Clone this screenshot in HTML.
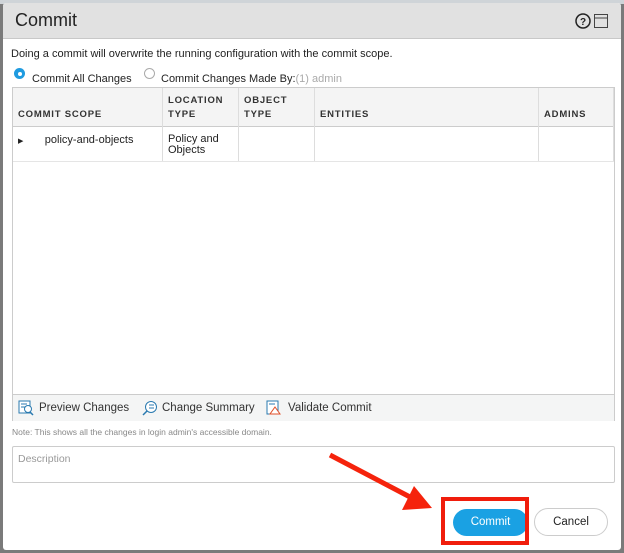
<!DOCTYPE html><html><head><style>
body{margin:0;width:624px;height:553px;background:#7a7a7a;font-family:"Liberation Sans",sans-serif;position:relative;overflow:hidden}
.dlg{position:absolute;left:3px;top:3px;width:618px;height:547px;background:#fff;border-radius:3px;overflow:hidden}
.title{height:35px;background:#e1e1e1;border-bottom:1px solid #c8c8c8;font-size:18px;color:#222;line-height:35px;padding-left:12px}
.abs{position:absolute}
table{border-collapse:collapse;font-size:11px;color:#222}
th{font-size:9.5px;letter-spacing:.8px;text-align:left;font-weight:bold;color:#333;border-right:1px solid #ddd;padding:0 5px;vertical-align:bottom;padding-bottom:4px;height:34px;line-height:14px}
td{border-right:1px solid #ddd;vertical-align:top;padding:7px 5px 3px;height:24px;border-bottom:1px solid #e5e5e5}
</style></head><body>
<div class="abs" style="left:0;top:0;width:624px;height:4px;background:#cfd4d8"></div>
<div class="dlg">
<div class="title">Commit
<svg class="abs" style="left:572px;top:10px" width="34" height="16"><circle cx="8" cy="8" r="7" fill="none" stroke="#222" stroke-width="1.5"/><text x="8" y="12" font-size="10" font-weight="bold" text-anchor="middle" fill="#222" font-family="Liberation Sans">?</text><rect x="19.5" y="1.5" width="13" height="13" fill="none" stroke="#444"/><line x1="19.5" y1="5" x2="32.5" y2="5" stroke="#444"/></svg></div>
<div class="abs" style="left:8px;top:45px;font-size:11px;color:#222">Doing a commit will overwrite the running configuration with the commit scope.</div>
<div class="abs" style="left:11px;top:65px;width:11px;height:11px;border-radius:50%;background:#1f9be0"><div style="margin:3.5px;width:4px;height:4px;border-radius:50%;background:#fff"></div></div>
<div class="abs" style="left:29px;top:70px;font-size:11px;color:#222">Commit All Changes</div>
<div class="abs" style="left:141px;top:65px;width:11px;height:11px;border-radius:50%;border:1px solid #aaa;box-sizing:border-box"></div>
<div class="abs" style="left:158px;top:70px;font-size:11px;color:#222">Commit Changes Made By:<span style="color:#aaa">(1) admin</span></div>
<div class="abs" style="left:9px;top:84px;width:603px;height:334px;border:1px solid #ccc;box-sizing:border-box">
<table style="width:601px">
<tr style="background:#f4f4f4;border-bottom:1px solid #ccc"><th style="width:139px">COMMIT SCOPE</th><th style="width:65px">LOCATION<br>TYPE</th><th style="width:65px">OBJECT<br>TYPE</th><th style="width:213px">ENTITIES</th><th>ADMINS</th></tr>
<tr><td><span style="font-size:7px">▶</span>&nbsp;&nbsp;&nbsp;&nbsp;&nbsp;&nbsp;&nbsp;policy-and-objects</td><td style="line-height:11px">Policy and<br>Objects</td><td></td><td></td><td></td></tr>
</table>
<div class="abs" style="left:0;top:306px;width:601px;height:26px;background:#f4f5f5;border-top:1px solid #ccc;font-size:11.5px;color:#333;line-height:26px">
<svg class="abs" style="left:5px;top:5px" width="16" height="16"><rect x="1" y="1" width="11" height="12" fill="#fff" stroke="#2a7ab0"/><line x1="3" y1="4" x2="9" y2="4" stroke="#2a7ab0"/><line x1="3" y1="7" x2="7" y2="7" stroke="#2a7ab0"/><circle cx="10" cy="9" r="3.5" fill="#fff" stroke="#2a7ab0"/><line x1="12" y1="12" x2="15" y2="15" stroke="#2a7ab0" stroke-width="1.5"/></svg><span class="abs" style="left:26px">Preview Changes</span>
<svg class="abs" style="left:129px;top:5px" width="16" height="16"><circle cx="9" cy="7" r="5.5" fill="#fff" stroke="#2a7ab0"/><line x1="5" y1="11" x2="1" y2="15" stroke="#2a7ab0" stroke-width="1.5"/><line x1="7" y1="5" x2="12" y2="5" stroke="#2a7ab0"/><line x1="7" y1="8" x2="12" y2="8" stroke="#2a7ab0"/></svg><span class="abs" style="left:149px">Change Summary</span>
<svg class="abs" style="left:253px;top:5px" width="18" height="16"><rect x="1" y="1" width="11" height="13" fill="#fff" stroke="#2a7ab0"/><line x1="3" y1="4" x2="9" y2="4" stroke="#2a7ab0"/><polygon points="9,7 14,14 4,14" fill="#fff" stroke="#e0502a"/></svg><span class="abs" style="left:275px">Validate Commit</span>
</div></div>
<div class="abs" style="left:9px;top:424px;font-size:8.5px;color:#888">Note: This shows all the changes in login admin's accessible domain.</div>
<div class="abs" style="left:9px;top:443px;width:603px;height:37px;border:1px solid #ccc;box-sizing:border-box;border-radius:2px;font-size:10.5px;color:#999;padding:6px 5px">Description</div>
<div class="abs" style="left:450px;top:506px;width:75px;height:27px;border-radius:14px;background:#1aa1e3;color:#fff;font-size:11.5px;text-align:center;line-height:27px">Commit</div>
<div class="abs" style="left:531px;top:505px;width:74px;height:28px;border-radius:14px;border:1px solid #ccc;box-sizing:border-box;color:#222;font-size:11.5px;text-align:center;line-height:26px">Cancel</div>
<div class="abs" style="left:438px;top:494px;width:88px;height:48px;border:4px solid #f01d0c;box-sizing:border-box"></div>
</div>
<svg class="abs" style="left:0;top:0" width="624" height="553"><line x1="330" y1="455" x2="410" y2="497" stroke="#f5230c" stroke-width="5"/><polygon points="402,510 432,508 414,486" fill="#f5230c"/></svg>
</body></html>
